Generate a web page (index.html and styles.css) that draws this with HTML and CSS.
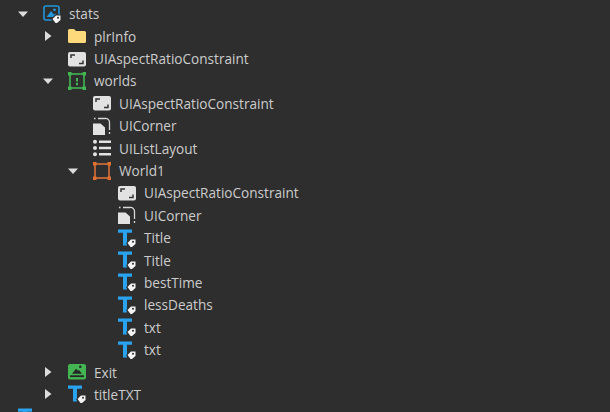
FILE: index.html
```html
<!DOCTYPE html>
<html lang="en">
<head>
  <meta charset="UTF-8">
  <title>Explorer</title>
  <link rel="stylesheet" href="styles.css">
</head>
<body>
  <svg class="defs" width="0" height="0">
    <symbol id="open" viewBox="0 0 16 16"><path d="M3 5.500h10L8 11z" fill="#dcdcdc"/></symbol>
    <symbol id="closed" viewBox="0 0 16 16"><path d="M5 3l6.500 5L5 13z" fill="#dcdcdc"/></symbol>
    <symbol id="tag" viewBox="0 0 18 18"><path d="M9.500 14l3.500-3.500h4.500V15L14 18h-1.500z" fill="#f4f4f4"/><circle cx="15" cy="12.800" r="1" fill="#2e2e2e"/></symbol>
    <symbol id="screen" viewBox="0 0 18 18">
      <rect x="1" y="1" width="15" height="14" rx="2" fill="none" stroke="#2196dc" stroke-width="1.600"/>
      <path d="M3.500 12l4.500-6 3 3.500 1.500-1 2.500 3.500z" fill="#2196dc"/><circle cx="11.500" cy="4.800" r="1.400" fill="#2196dc"/>
      <path d="M8 14.500l4-5h6V15l-4 3h-3z" fill="#2e2e2e"/>
      <use href="#tag"/>
    </symbol>
    <symbol id="folder" viewBox="0 0 18 18"><path d="M0 3.500a1.500 1.500 0 0 1 1.500-1.500h4.500l2 2h8.500a1.500 1.500 0 0 1 1.500 1.500v9a1.500 1.500 0 0 1-1.500 1.500h-15A1.500 1.500 0 0 1 0 14.500z" fill="#fdd97b"/></symbol>
    <symbol id="ratio" viewBox="0 0 18 18">
      <rect x="0" y="2" width="18" height="14.500" rx="2" fill="#e2e2e2"/>
      <path d="M3 8V5h4M15 10.500v3h-4" fill="none" stroke="#333" stroke-width="1.500"/>
    </symbol>
    <symbol id="corner" viewBox="0 0 18 18">
      <path d="M0 6.500h7.500l4.500 4V18H0z" fill="#e2e2e2"/>
      <path d="M1 1.500h1.500M5 1.500h7a4 4 0 0 1 4.500 4.500v7M16.500 15v2" fill="none" stroke="#d8d8d8" stroke-width="1.300"/>
    </symbol>
    <symbol id="list" viewBox="0 0 18 18">
      <circle cx="2" cy="2.800" r="2" fill="#e2e2e2"/><circle cx="2" cy="9" r="2" fill="#e2e2e2"/><circle cx="2" cy="15.200" r="2" fill="#e2e2e2"/>
      <path d="M6 1.500h12v2.500H6zM6 7.800h12v2.500H6zM6 14h12v2.500H6z" fill="#e2e2e2"/>
    </symbol>
    <symbol id="frame-green" viewBox="0 0 18 18">
      <rect x="2" y="2" width="14" height="14" fill="none" stroke="#43b653" stroke-width="1.600"/>
      <path d="M0 0h3.500v3.500H0zM14.500 0H18v3.500h-3.500zM0 14.500h3.500V18H0zM14.500 14.500H18V18h-3.500z" fill="#43b653"/>
      <path d="M8 6h2v3.500H8zM8 10.800h2v2.400H8z" fill="#43b653"/>
    </symbol>
    <symbol id="frame-orange" viewBox="0 0 18 18">
      <rect x="2" y="2" width="14" height="14" fill="none" stroke="#d9703a" stroke-width="1.600"/>
      <path d="M0 0h3.500v3.500H0zM14.500 0H18v3.500h-3.500zM0 14.500h3.500V18H0zM14.500 14.500H18V18h-3.500z" fill="#e0702f"/>
    </symbol>
    <symbol id="text" viewBox="0 0 18 18">
      <path d="M0 .5h14V3.800H9V16.500H5V3.800H0z" fill="#2aa3ef"/>
      <path d="M8 14.500l4-5h6V15l-4 3h-3z" fill="#2e2e2e"/>
      <use href="#tag"/>
    </symbol>
    <symbol id="button" viewBox="0 0 18 18">
      <rect x="0" y="1" width="18" height="15.500" rx="2" fill="#43b653"/>
      <path d="M4 10.800l4-5 2 2 1-.7 3 3.700z" fill="#262626"/><circle cx="12.300" cy="3.800" r="1.300" fill="#262626"/>
      <rect x="2" y="12.300" width="14" height="1.800" fill="#262626"/>
    </symbol>
  </svg>

  <ul class="tree">
    <li class="row d0"><svg class="arrow"><use href="#open"/></svg><svg class="icon"><use href="#screen"/></svg><span>stats</span></li>
    <li class="row d1"><svg class="arrow"><use href="#closed"/></svg><svg class="icon"><use href="#folder"/></svg><span>plrInfo</span></li>
    <li class="row d1"><i class="arrow"></i><svg class="icon"><use href="#ratio"/></svg><span>UIAspectRatioConstraint</span></li>
    <li class="row d1"><svg class="arrow"><use href="#open"/></svg><svg class="icon"><use href="#frame-green"/></svg><span>worlds</span></li>
    <li class="row d2"><i class="arrow"></i><svg class="icon"><use href="#ratio"/></svg><span>UIAspectRatioConstraint</span></li>
    <li class="row d2"><i class="arrow"></i><svg class="icon"><use href="#corner"/></svg><span>UICorner</span></li>
    <li class="row d2"><i class="arrow"></i><svg class="icon"><use href="#list"/></svg><span>UIListLayout</span></li>
    <li class="row d2"><svg class="arrow"><use href="#open"/></svg><svg class="icon"><use href="#frame-orange"/></svg><span>World1</span></li>
    <li class="row d3"><i class="arrow"></i><svg class="icon"><use href="#ratio"/></svg><span>UIAspectRatioConstraint</span></li>
    <li class="row d3"><i class="arrow"></i><svg class="icon"><use href="#corner"/></svg><span>UICorner</span></li>
    <li class="row d3"><i class="arrow"></i><svg class="icon"><use href="#text"/></svg><span>Title</span></li>
    <li class="row d3"><i class="arrow"></i><svg class="icon"><use href="#text"/></svg><span>Title</span></li>
    <li class="row d3"><i class="arrow"></i><svg class="icon"><use href="#text"/></svg><span>bestTime</span></li>
    <li class="row d3"><i class="arrow"></i><svg class="icon"><use href="#text"/></svg><span>lessDeaths</span></li>
    <li class="row d3"><i class="arrow"></i><svg class="icon"><use href="#text"/></svg><span>txt</span></li>
    <li class="row d3"><i class="arrow"></i><svg class="icon"><use href="#text"/></svg><span>txt</span></li>
    <li class="row d1"><svg class="arrow"><use href="#closed"/></svg><svg class="icon"><use href="#button"/></svg><span>Exit</span></li>
    <li class="row d1"><svg class="arrow"><use href="#closed"/></svg><svg class="icon"><use href="#text"/></svg><span>titleTXT</span></li>
    <li class="row root"><svg class="icon"><use href="#text"/></svg></li>
  </ul>
</body>
</html>
```

FILE: styles.css
```css
html, body { margin: 0; height: 100%; overflow: hidden; }
body { background: #2e2e2e; color: #cccccc; font-family: "Open Sans", "Noto Sans", sans-serif; font-size: 13.6px; }
.defs { display: block; height: 0; }
.tree { list-style: none; margin: 0; padding: 2.6px 0 0; }
.row { display: flex; align-items: center; height: 22.4px; }
.d0 { padding-left: 15px; }
.d1 { padding-left: 40px; }
.d2 { padding-left: 65px; }
.d3 { padding-left: 90px; }
.root { padding-left: 18px; }
.arrow { display: block; flex: none; width: 16px; height: 16px; margin-right: 12px; }
.icon { display: block; flex: none; width: 18px; height: 18px; margin-right: 8px; }
```
